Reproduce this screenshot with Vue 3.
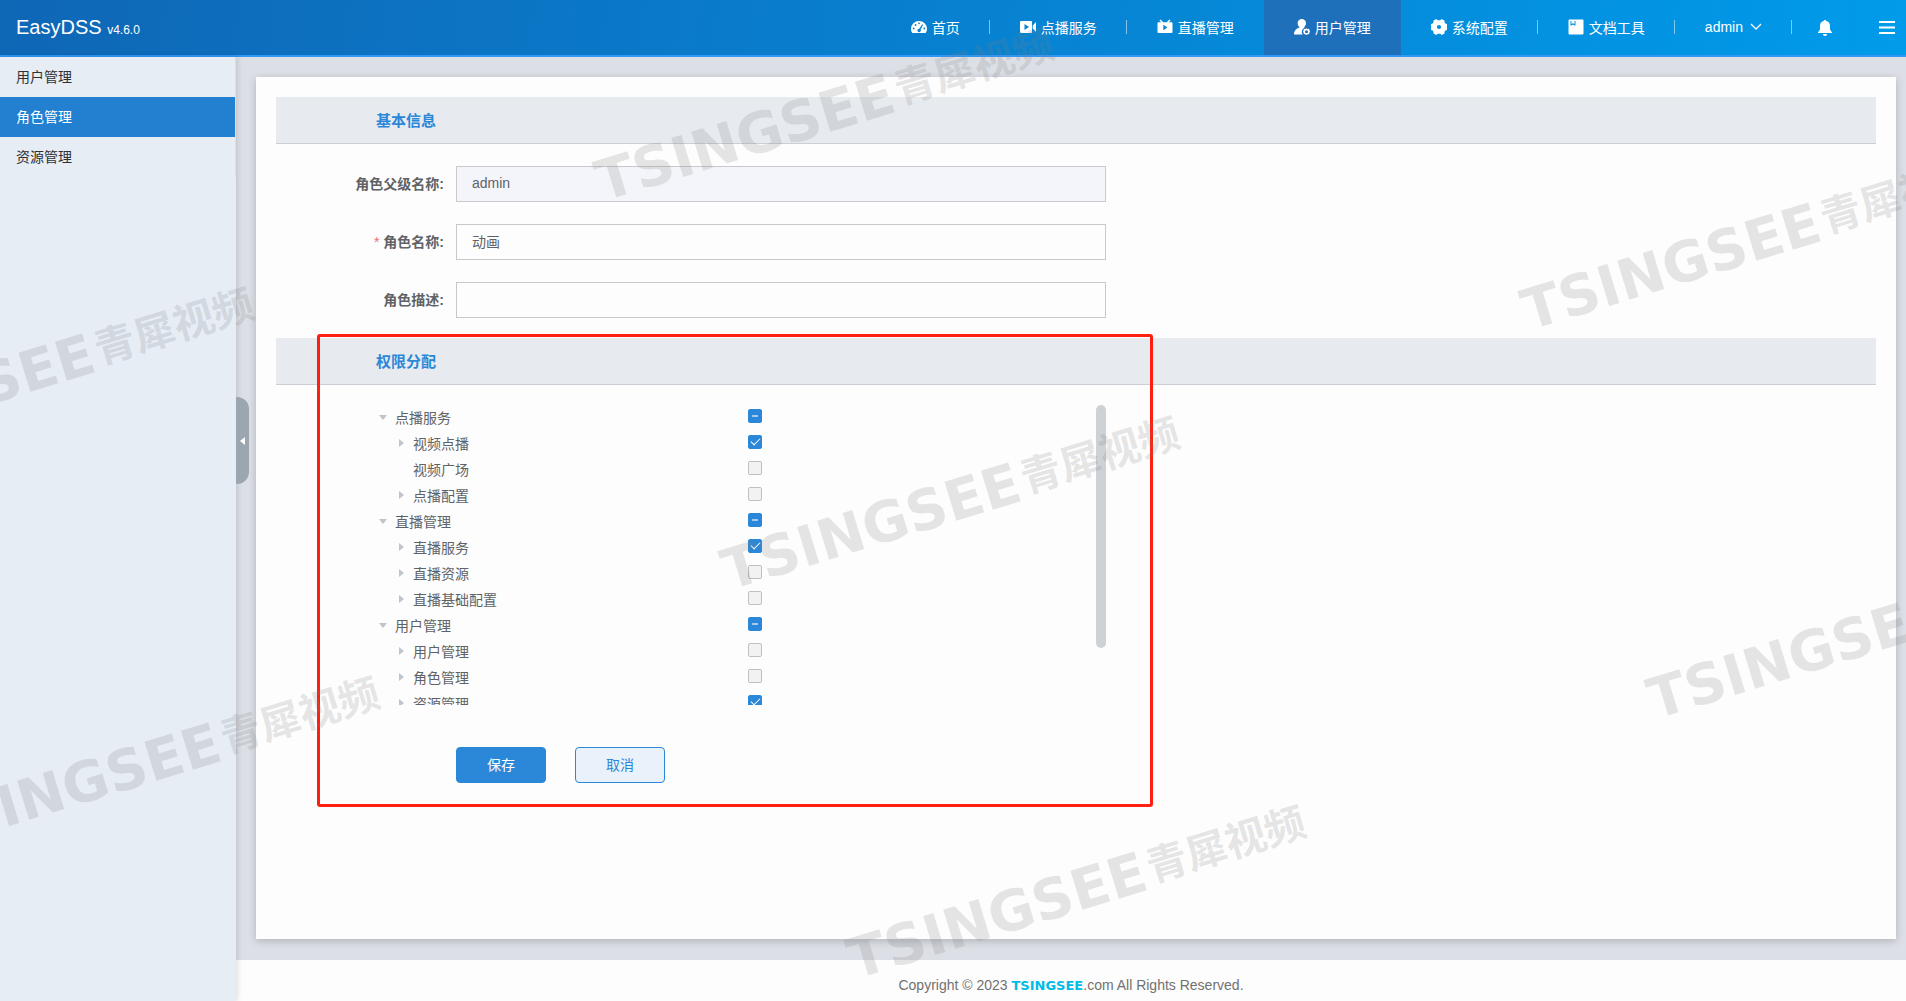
<template>
  <div class="page">
    <header class="header">
      <h1 class="header__brand">EasyDSS <small>v4.6.0</small></h1>
      <nav class="nav">
        <div
          v-for="item in navItems"
          :key="item.label"
          :class="['nav__item', { 'nav__item--active': item.active }]"
        >
          <a href="#" class="nav__link">
            <svg class="nav__icon" viewBox="0 0 16 16" aria-hidden="true">
              <path :d="item.icon" fill="currentColor" fill-rule="evenodd" />
            </svg>
            {{ item.label }}
          </a>
          <span v-if="item.divider" class="nav__divider"></span>
        </div>
        <div class="nav__item">
          <button type="button" class="nav__link nav__link--account">
            admin
            <svg class="nav__chevron" viewBox="0 0 12 12" aria-hidden="true">
              <path d="M1 3l5 5 5-5" fill="none" stroke="currentColor" stroke-width="1.300" />
            </svg>
          </button>
          <span class="nav__divider"></span>
        </div>
        <button type="button" class="nav__tool nav__tool--bell" aria-label="消息">
          <svg viewBox="0 0 16 16" aria-hidden="true">
            <path
              d="M7 .8a1 1 0 0 1 2 0C11.600 1.300 13 3.300 13 6v3.500L15 12.500v.5H1v-.5L3 9.500V6C3 3.300 4.400 1.300 7 .8zM5.800 14h4.400a2.200 2 0 0 1-4.400 0z"
              fill="currentColor"
            />
          </svg>
        </button>
        <button type="button" class="nav__tool" aria-label="菜单">
          <svg viewBox="0 0 16 16" aria-hidden="true">
            <path d="M0 2h16M0 7.500h16M0 13h16" stroke="currentColor" stroke-width="1.800" />
          </svg>
        </button>
      </nav>
    </header>

    <div class="body">
      <aside class="sidebar">
        <ul class="sidebar__menu">
          <li v-for="item in sideItems" :key="item">
            <a
              href="#"
              :class="['sidebar__link', { 'sidebar__link--active': item === activeSide }]"
              @click.prevent="activeSide = item"
            >{{ item }}</a>
          </li>
        </ul>
        <button type="button" class="sidebar__toggle" aria-label="收起"></button>
      </aside>

      <div class="content">
        <main class="main">
          <form class="card" @submit.prevent>
            <section>
              <h2 class="section-title">基本信息</h2>
              <div class="fields">
                <div class="field">
                  <label class="field__label" for="parent">角色父级名称:</label>
                  <input id="parent" v-model="form.parent" class="field__input" type="text" disabled />
                </div>
                <div class="field">
                  <label class="field__label field__label--required" for="name">角色名称:</label>
                  <input id="name" v-model="form.name" class="field__input" type="text" />
                </div>
                <div class="field">
                  <label class="field__label" for="desc">角色描述:</label>
                  <input id="desc" v-model="form.desc" class="field__input" type="text" />
                </div>
              </div>
            </section>

            <section class="permission">
              <h2 class="section-title">权限分配</h2>
              <div class="tree">
                <div class="tree__view">
                  <div v-for="(node, index) in nodes" :key="index" class="tree__row">
                    <div :class="['tree__node', { 'tree__node--child': node.child }]">
                      <span class="tree__caret">
                        <i v-if="node.caret" :class="`caret caret--${node.caret}`"></i>
                      </span>
                      <label :for="`node-${index}`">{{ node.label }}</label>
                    </div>
                    <input
                      :id="`node-${index}`"
                      v-model="node.checked"
                      class="checkbox"
                      type="checkbox"
                      :indeterminate="node.partial"
                    />
                  </div>
                </div>
                <div class="tree__bar"></div>
              </div>
              <div class="actions">
                <button type="submit" class="btn btn--primary">保存</button>
                <button type="button" class="btn">取消</button>
              </div>
              <div class="permission__highlight"></div>
            </section>
          </form>
        </main>
        <footer class="footer">
          Copyright © 2023 <a href="#" class="footer__logo">TSINGSEE</a>.com All Rights Reserved.
        </footer>
      </div>
    </div>

    <svg class="watermark" aria-hidden="true">
      <g
        v-for="(mark, index) in watermarks"
        :key="index"
        :transform="`translate(${mark.x} ${mark.y}) rotate(-17)`"
      >
        <text class="watermark__en" x="0" y="38">TSINGSEE</text>
        <text class="watermark__cn" x="312" y="32">青犀视频</text>
      </g>
    </svg>
  </div>
</template>

<script setup>
import { reactive, ref } from 'vue'

const icons = {
  home: 'M8 2a8 8 0 0 0-8 8c0 1.500.5 2.900 1.300 4h13.400A7 7 0 0 0 16 10a8 8 0 0 0-8-8zM1.800 9.500a.9.9 0 1 0 1.800 0a.9.9 0 1 0-1.800 0zM3.700 6a.9.9 0 1 0 1.800 0a.9.9 0 1 0-1.800 0zM7.100 4.300a.9.9 0 1 0 1.800 0a.9.9 0 1 0-1.800 0zM12.400 9.500a.9.9 0 1 0 1.800 0a.9.9 0 1 0-1.800 0zM11.200 5.200l.9.5L9.600 10.500a1.700 1.700 0 1 1-1.400-.8z',
  vod: 'M1 2h10a1 1 0 0 1 1 1v10a1 1 0 0 1-1 1H1a1 1 0 0 1-1-1V3a1 1 0 0 1 1-1zM4.500 5v6L9 8zM12.700 6.500L16 3v10l-3.300-3.500z',
  live: 'M3.500.5L6.300 3.200h3.400L12.500.5l1 1-1.700 1.700H14.500a1 1 0 0 1 1 1V13a1 1 0 0 1-1 1h-13a1 1 0 0 1-1-1V4.200a1 1 0 0 1 1-1h2.700L2.500 1.500zM6.300 5.800v5.400L10.500 8.500z',
  user: 'M7.800 0a4.200 4.200 0 0 1 4.200 4.200C12 6 11 7.300 9.900 8.200c.4.3.9.5 1.400.6a4 4 0 0 0-2.500 6.700H0C0 11.500 2 10 5.700 8.200 4.600 7.300 3.600 6 3.600 4.200A4.200 4.200 0 0 1 7.800 0zM12.500 9.300l1.200.7 1.500.1.300 1.400.5 1-.6 1.200-.3 1.400-1.400.2-1.200.7-1.200-.7-1.400-.2-.3-1.400-.6-1.200.6-1.100.3-1.300 1.400-.1zM11 12.700a1.500 1.500 0 1 0 3 0a1.500 1.500 0 1 0-3 0z',
  gear: 'M5.400 0L6.700 1.200h2.600L10.600 0l2.900 1.400v1.900l.9 1.200 1.600.4v6.200l-1.600.4-.9 1.200v1.900L10.600 16 9.300 14.800H6.700L5.400 16l-2.900-1.400v-1.900l-.9-1.200L0 11.100V4.900l1.600-.4.9-1.200V1.400zM5.900 8a2.100 2.100 0 1 0 4.200 0a2.100 2.100 0 1 0-4.200 0z',
  doc: 'M1.500.5h13a1 1 0 0 1 1 1v13a1 1 0 0 1-1 1h-13a1 1 0 0 1-1-1v-13a1 1 0 0 1 1-1zM2.500 2v4.500h1L5 5.500l1.500 1h1V2h-1v3L5 4.200 3.500 5V2z'
}

const navItems = [
  { label: '首页', icon: icons.home, divider: true },
  { label: '点播服务', icon: icons.vod, divider: true },
  { label: '直播管理', icon: icons.live },
  { label: '用户管理', icon: icons.user, active: true },
  { label: '系统配置', icon: icons.gear, divider: true },
  { label: '文档工具', icon: icons.doc, divider: true }
]

const sideItems = ['用户管理', '角色管理', '资源管理']
const activeSide = ref('角色管理')

const form = reactive({ parent: 'admin', name: '动画', desc: '' })

const nodes = reactive([
  { label: '点播服务', caret: 'down', checked: false, partial: true },
  { label: '视频点播', caret: 'right', child: true, checked: true },
  { label: '视频广场', child: true, checked: false },
  { label: '点播配置', caret: 'right', child: true, checked: false },
  { label: '直播管理', caret: 'down', checked: false, partial: true },
  { label: '直播服务', caret: 'right', child: true, checked: true },
  { label: '直播资源', caret: 'right', child: true, checked: false },
  { label: '直播基础配置', caret: 'right', child: true, checked: false },
  { label: '用户管理', caret: 'down', checked: false, partial: true },
  { label: '用户管理', caret: 'right', child: true, checked: false },
  { label: '角色管理', caret: 'right', child: true, checked: false },
  { label: '资源管理', caret: 'right', child: true, checked: true }
])

// the mark repeats on a slanted grid, skip the ones that fall outside
const watermarks = []
for (let col = 0; col < 3; col++) {
  for (let row = 0; row < 4; row++) {
    const x = -208 + col * 800 + row * 126
    const y = 425 - col * 260 + row * 389
    if (x < 1800 && y > 0 && y < 1000) {
      watermarks.push({ x, y })
    }
  }
}
</script>

<style>
body {
  margin: 0;
}
</style>

<style scoped>
.page {
  position: relative;
  display: flex;
  flex-direction: column;
  min-height: 100vh;
  overflow: hidden;
  font-family: "Liberation Sans", "Noto Sans CJK SC", sans-serif;
  font-size: 14px;
  color: #606266;
}

button,
input {
  font: inherit;
}

/* header */
.header {
  display: flex;
  justify-content: space-between;
  height: 55px;
  padding: 0 11px 0 16px;
  color: #fff;
  background: linear-gradient(100deg, #0f67b6, #009bea);
  border-bottom: 2px solid #2f97f5;
}

.header__brand {
  margin: 0;
  font-size: 20px;
  font-weight: 400;
  line-height: 55px;
}

.header__brand small {
  font-size: 12px;
}

.nav {
  display: flex;
  align-items: center;
}

.nav__item {
  display: flex;
  align-items: center;
  height: 55px;
}

.nav__item--active {
  background: #1f70ba;
}

.nav__link {
  box-sizing: border-box;
  display: flex;
  align-items: center;
  gap: 5px;
  height: 55px;
  padding: 0 30px 2px;
  border: none;
  background: transparent;
  color: #fff;
  text-decoration: none;
  white-space: nowrap;
  cursor: pointer;
}

.nav__link--account {
  gap: 7px;
}

.nav__icon {
  width: 16px;
  height: 16px;
}

.nav__chevron {
  width: 12px;
  height: 12px;
}

.nav__divider {
  width: 1px;
  height: 14px;
  margin: 0 0 2px -1px;
  background: rgba(255, 255, 255, 0.5);
}

.nav__tool {
  display: flex;
  padding: 0;
  border: none;
  background: transparent;
  color: #fff;
  cursor: pointer;
}

.nav__tool svg {
  width: 16px;
  height: 16px;
}

.nav__tool--bell {
  margin: 0 46px 0 25px;
}

/* layout */
.body {
  display: flex;
  flex: 1;
}

.sidebar {
  position: relative;
  z-index: 1;
  flex: none;
  width: 236px;
  background: #e6edf5;
  box-shadow: 1px 0 6px rgba(0, 0, 0, 0.15);
}

.sidebar__menu {
  margin: 0;
  padding: 0;
  list-style: none;
  border-right: 1px solid #dcdfe6;
}

.sidebar__link {
  display: block;
  padding-left: 16px;
  line-height: 40px;
  color: #303133;
  text-decoration: none;
}

.sidebar__link--active {
  color: #fff;
  background: #2380d0;
}

.sidebar__toggle {
  position: absolute;
  top: 340px;
  left: 100%;
  display: flex;
  align-items: center;
  justify-content: center;
  width: 13px;
  height: 87px;
  padding: 0;
  border: none;
  border-radius: 0 12px 12px 0;
  background: #9ba6b1;
  cursor: pointer;
}

.sidebar__toggle::before {
  content: '';
  border: 4px solid transparent;
  border-right: 5px solid #fff;
  border-left: none;
}

.content {
  display: flex;
  flex: 1;
  flex-direction: column;
}

.main {
  display: flex;
  flex: 1;
  padding: 20px 10px 21px 20px;
  background: #dcdfe6;
}

.card {
  flex: 1;
  padding: 20px;
  background: #fdfdfd;
  box-shadow: 0 2px 8px rgba(0, 0, 0, 0.2);
}

.footer {
  height: 41px;
  line-height: 50px;
  text-align: center;
  color: #717171;
  background: #fdfdfd;
}

.footer__logo {
  font-family: "DejaVu Sans", sans-serif;
  font-size: 13px;
  font-weight: 700;
  line-height: 16px;
  color: #00bbe6;
  text-decoration: none;
}

/* form */
.section-title {
  margin: 0;
  padding: 2px 0 0 100px;
  font-size: 15px;
  font-weight: 700;
  line-height: 44px;
  color: #2b87d8;
  background: #e7eaef;
  border-bottom: 1px solid #cbd0d7;
}

.fields {
  display: grid;
  gap: 22px;
  padding: 22px 0 20px;
}

.field {
  display: flex;
  align-items: center;
}

.field__label {
  box-sizing: border-box;
  width: 180px;
  padding: 0 12px 2px 0;
  font-weight: 700;
  text-align: right;
}

.field__label--required::before {
  content: '*';
  margin-right: 4px;
  font-weight: 400;
  color: #f56c6c;
}

.field__input {
  box-sizing: border-box;
  width: 100%;
  max-width: 650px;
  height: 36px;
  padding: 0 15px 2px;
  border: 1px solid #c8c9cc;
  background: #fdfdfd;
  color: #606266;
}

.field__input:disabled {
  background: #f4f5fa;
}

/* permission tree */
.permission {
  position: relative;
}

.permission__highlight {
  position: absolute;
  top: -4px;
  bottom: -24px;
  left: 41px;
  box-sizing: border-box;
  width: 836px;
  border: 3px solid #ff1f10;
  border-radius: 3px;
  pointer-events: none;
}

.tree {
  display: flex;
  max-width: 735px;
  margin: 20px 0 0 95px;
}

.tree__view {
  flex: 1;
  height: 300px;
  overflow-y: auto;
  scrollbar-width: none;
}

.tree__bar {
  width: 10px;
  height: 243px;
  border-radius: 5px;
  background: #cdd2d7;
}

.tree__row {
  display: grid;
  grid-template-columns: 377px auto;
  justify-content: start;
  height: 26px;
}

.tree__node {
  display: flex;
  align-items: center;
  height: 24px;
}

.tree__node--child {
  padding-left: 18px;
}

.tree__caret {
  display: flex;
  justify-content: center;
  width: 24px;
}

.caret {
  border: 4px solid transparent;
}

.caret--down {
  border-top: 5px solid #c0c4cc;
  border-bottom: none;
}

.caret--right {
  border-left: 5px solid #c0c4cc;
  border-right: none;
}

.checkbox {
  display: flex;
  align-items: center;
  justify-content: center;
  box-sizing: border-box;
  width: 14px;
  height: 14px;
  margin: 4px 0 0;
  border: 1px solid #bfc0c2;
  border-radius: 2px;
  background: #f2f2f2;
  appearance: none;
}

.checkbox:checked,
.checkbox:indeterminate {
  border-color: #2b87d8;
  background: #2b87d8;
}

.checkbox:checked::after {
  content: '';
  width: 9px;
  height: 5px;
  margin-bottom: 3px;
  box-sizing: border-box;
  border: solid #fff;
  border-width: 0 0 1px 1px;
  transform: rotate(-45deg);
}

.checkbox:indeterminate::after {
  content: '';
  width: 6px;
  height: 2px;
  background: #a3cbef;
}

.actions {
  display: flex;
  gap: 29px;
  padding: 42px 0 0 180px;
}

.btn {
  width: 90px;
  height: 36px;
  padding: 0 0 2px;
  border: 1px solid #2b87d8;
  border-radius: 4px;
  color: #2b87d8;
  background: #e9f2fb;
  cursor: pointer;
}

.btn--primary {
  color: #fff;
  background: #2b87d8;
}

/* watermark */
.watermark {
  position: absolute;
  inset: 0;
  z-index: 2;
  width: 100%;
  height: 100%;
  fill: rgba(128, 128, 128, 0.2);
  font-weight: 700;
  pointer-events: none;
}

.watermark__en {
  font-family: "DejaVu Sans", sans-serif;
  font-size: 56px;
}

.watermark__cn {
  font-family: "Noto Sans CJK SC", sans-serif;
  font-size: 41px;
}
</style>
